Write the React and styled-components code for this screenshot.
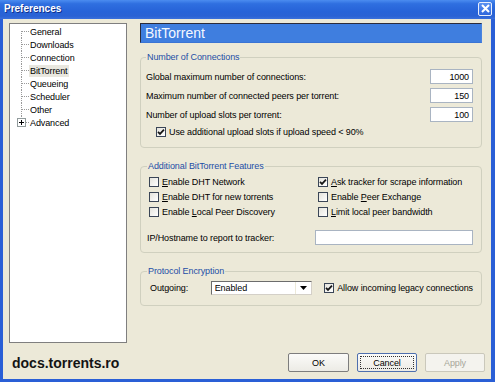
import React from "react";
import styled, { createGlobalStyle, css } from "styled-components";

const GlobalStyle = createGlobalStyle`
  *,
  *::before,
  *::after {
    box-sizing: border-box;
  }
  html,
  body {
    margin: 0;
    padding: 0;
    background: #ece9d8;
  }
  body {
    font-family: "Liberation Sans", Arial, sans-serif;
    font-size: 9px;
    letter-spacing: -0.1px;
    color: #000;
  }
`;

const treeItems = [
  "General",
  "Downloads",
  "Connection",
  "BitTorrent",
  "Queueing",
  "Scheduler",
  "Other",
  "Advanced"
];

function CheckMark() {
  return (
    <svg width="8" height="8" viewBox="0 0 8 8">
      <polyline
        points="1,3.8 3,5.9 7,1.6"
        fill="none"
        stroke="#151515"
        strokeWidth="1.7"
      />
    </svg>
  );
}

function Check({ checked, children }) {
  return (
    <CheckRow>
      <Box>{checked && <CheckMark />}</Box>
      <span>{children}</span>
    </CheckRow>
  );
}

function App() {
  return (
    <Window>
      <GlobalStyle />
      <TitleBar>
        <Title>Preferences</Title>
        <CloseButton>
          <svg width="9" height="9" viewBox="0 0 9 9">
            <path d="M1 1 L8 8 M8 1 L1 8" stroke="#fff" strokeWidth="2" />
          </svg>
        </CloseButton>
      </TitleBar>
      <Frame>
        <Body>
          <Main>
            <Tree>
              {treeItems.map((item, i) => (
                <TreeItem key={item}>
                  <Gutter $first={i === 0} $last={i === treeItems.length - 1}>
                    {item === "Advanced" && (
                      <Expander>
                        <svg width="9" height="9" viewBox="0 0 9 9">
                          <rect x="0.5" y="0.5" width="8" height="8" fill="#fff" stroke="#919b9c" />
                          <path d="M2 4.5 H7 M4.5 2 V7" stroke="#000" />
                        </svg>
                      </Expander>
                    )}
                  </Gutter>
                  <TreeLabel $selected={item === "BitTorrent"}>{item}</TreeLabel>
                </TreeItem>
              ))}
            </Tree>
            <Panel>
              <Header>BitTorrent</Header>
              <Group $top={8} $pad="6px 8px 8px 5px">
                <Legend>Number of Connections</Legend>
                <Rows>
                  <Row>
                    <span>Global maximum number of connections:</span>
                    <NumberBox>1000</NumberBox>
                  </Row>
                  <Row>
                    <span>Maximum number of connected peers per torrent:</span>
                    <NumberBox>150</NumberBox>
                  </Row>
                  <Row>
                    <span>Number of upload slots per torrent:</span>
                    <NumberBox>100</NumberBox>
                  </Row>
                  <Indented>
                    <Check checked>Use additional upload slots if upload speed &lt; 90%</Check>
                  </Indented>
                </Rows>
              </Group>
              <Group $top={12} $pad="2px 8px 7px 6px">
                <Legend>Additional BitTorrent Features</Legend>
                <Features>
                  <Check>
                    <u>E</u>nable DHT Network
                  </Check>
                  <Check checked>
                    <u>A</u>sk tracker for scrape information
                  </Check>
                  <Check>
                    <u>E</u>nable DHT for new torrents
                  </Check>
                  <Check>
                    Enable <u>P</u>eer Exchange
                  </Check>
                  <Check>
                    Enable <u>L</u>ocal Peer Discovery
                  </Check>
                  <Check>
                    <u>L</u>imit local peer bandwidth
                  </Check>
                </Features>
                <IpRow>
                  <span>IP/Hostname to report to tracker:</span>
                  <TextBox $width={158} />
                </IpRow>
              </Group>
              <Group $top={12} $pad="4px 8px 10px 6px">
                <Legend>Protocol Encryption</Legend>
                <EncRow>
                  <OutLabel>Outgoing:</OutLabel>
                  <Select>
                    <SelectText>Enabled</SelectText>
                    <SelectArrow>
                      <svg width="7" height="4" viewBox="0 0 7 4">
                        <path d="M0 0 H7 L3.5 4 Z" fill="#000" />
                      </svg>
                    </SelectArrow>
                  </Select>
                  <Check checked>Allow incoming legacy connections</Check>
                </EncRow>
              </Group>
            </Panel>
          </Main>
          <Footer>
            <Brand>docs.torrents.ro</Brand>
            <Buttons>
              <Button $width={61}>OK</Button>
              <Button $width={60} $focused>
                <Focus>Cancel</Focus>
              </Button>
              <Button $width={60} $disabled>
                Apply
              </Button>
            </Buttons>
          </Footer>
        </Body>
      </Frame>
    </Window>
  );
}

const Window = styled.div`
  width: 495px;
  height: 382px;
  display: flex;
  flex-direction: column;
  background: #2a5fd6;
  overflow: hidden;
`;
const TitleBar = styled.div`
  height: 19px;
  flex: none;
  display: flex;
  align-items: center;
  justify-content: space-between;
  padding: 0 3px 2px 4px;
  background: linear-gradient(
    #4b8cf0 0%,
    #2f6fe0 20%,
    #2763d8 60%,
    #2a62d4 85%,
    #3a70dc 100%
  );
`;
const Title = styled.span`
  color: #fff;
  font-family: "Liberation Sans", Arial, sans-serif;
  font-weight: bold;
  font-size: 10px;
  letter-spacing: 0;
  text-shadow: 1px 1px 0 #0f2f8a;
`;
const CloseButton = styled.div`
  width: 14px;
  height: 14px;
  display: flex;
  align-items: center;
  justify-content: center;
  background: linear-gradient(#5a92f2, #2f67dc);
  border: 1px solid #e8eefc;
  border-radius: 2px;
`;
const Frame = styled.div`
  flex: 1;
  display: flex;
  min-width: 0;
  padding: 0 4px 3px 3px;
`;
const Body = styled.div`
  flex: 1;
  min-width: 0;
  display: flex;
  flex-direction: column;
  padding: 4px 6px 7px 6px;
  background: #ece9d8;
`;
const Main = styled.div`
  display: flex;
  height: 320px;
  margin-right: 3px;
`;
const Tree = styled.div`
  width: 118px;
  flex: none;
  padding-top: 1px;
  background: #fff;
  border: 1px solid #7f7f7f;
`;
const TreeItem = styled.div`
  height: 13px;
  display: flex;
  align-items: center;
`;
const Gutter = styled.div`
  position: relative;
  width: 19px;
  height: 13px;
  flex: none;
  &::before {
    content: "";
    position: absolute;
    left: 11px;
    top: ${p => (p.$first ? "6px" : "0")};
    bottom: ${p => (p.$last ? "6px" : "0")};
    border-left: 1px dotted #9a9a9a;
  }
  &::after {
    content: "";
    position: absolute;
    left: 12px;
    top: 6px;
    width: 7px;
    border-top: 1px dotted #9a9a9a;
  }
`;
const Expander = styled.div`
  position: absolute;
  left: 7px;
  top: 2px;
  z-index: 1;
  line-height: 0;
`;
const TreeLabel = styled.span`
  padding: 0 1px;
  line-height: 12px;
  white-space: nowrap;
  ${p =>
    p.$selected &&
    css`
      background: #e9e7df;
    `}
`;
const Panel = styled.div`
  flex: 1;
  min-width: 0;
  margin-left: 13px;
  display: flex;
  flex-direction: column;
`;
const Header = styled.div`
  height: 20px;
  display: flex;
  align-items: center;
  padding-left: 4px;
  font-size: 14px;
  letter-spacing: 0;
  color: #f4f8ff;
  background: #3f7edf;
  border: 1px solid;
  border-color: #2b2b3a #4a84e0 #3a74d4 #2b2b3a;
`;
const Group = styled.fieldset`
  margin: ${p => p.$top}px 0 0;
  padding: ${p => p.$pad};
  min-width: 0;
  border: 1px solid #d0d0bf;
  border-radius: 4px;
`;
const Legend = styled.legend`
  padding: 0 1px;
  line-height: 12px;
  color: #1d4ea6;
`;
const Rows = styled.div`
  display: flex;
  flex-direction: column;
  gap: 4px;
`;
const Row = styled.div`
  height: 15px;
  display: flex;
  align-items: center;
  justify-content: space-between;
`;
const NumberBox = styled.div`
  width: 43px;
  height: 15px;
  padding-right: 3px;
  display: flex;
  align-items: center;
  justify-content: flex-end;
  background: #fff;
  border: 1px solid #a9b4c2;
`;
const TextBox = styled.div`
  width: ${p => p.$width}px;
  height: 15px;
  background: #fff;
  border: 1px solid #a9b4c2;
`;
const Indented = styled.div`
  margin-top: -2px;
  padding-left: 10px;
`;
const CheckRow = styled.div`
  height: 15px;
  display: flex;
  align-items: center;
  gap: 3px;
  white-space: nowrap;
  u {
    text-decoration: underline;
    text-underline-offset: 1px;
  }
`;
const Box = styled.span`
  width: 10px;
  height: 10px;
  flex: none;
  display: flex;
  align-items: center;
  justify-content: center;
  background: linear-gradient(135deg, #e4e3dc, #fff);
  border: 1px solid #3a4556;
`;
const Features = styled.div`
  display: grid;
  grid-template-columns: 169px 1fr;
  margin-left: 2px;
`;
const IpRow = styled.div`
  margin-top: 11px;
  height: 15px;
  display: flex;
  align-items: center;
  justify-content: space-between;
`;
const EncRow = styled.div`
  height: 14px;
  display: flex;
  align-items: center;
  padding-left: 3px;
`;
const OutLabel = styled.span`
  width: 61px;
`;
const Select = styled.div`
  width: 102px;
  height: 14px;
  margin-right: 12px;
  display: flex;
  align-items: center;
  background: #fff;
  border: 1px solid;
  border-color: #6c6c6c #d4d0c8 #d4d0c8 #6c6c6c;
`;
const SelectText = styled.span`
  flex: 1;
  padding-left: 3px;
`;
const SelectArrow = styled.span`
  width: 16px;
  height: 12px;
  display: flex;
  align-items: center;
  justify-content: center;
  border-left: 1px solid #ece9d8;
`;
const Footer = styled.div`
  margin-top: 10px;
  height: 19px;
  display: flex;
  align-items: center;
  justify-content: space-between;
`;
const Brand = styled.span`
  margin-left: 3px;
  font-size: 14px;
  font-weight: bold;
  letter-spacing: 0;
  color: #141414;
`;
const Buttons = styled.div`
  display: flex;
  gap: 8px;
`;
const Button = styled.div`
  width: ${p => p.$width}px;
  height: 19px;
  display: flex;
  align-items: center;
  justify-content: center;
  background: linear-gradient(#fbfbf9, #ecebe5);
  border: 1px solid #7d7d7d;
  border-radius: 2px;
  ${p =>
    p.$focused &&
    css`
      border-color: #4e6fae;
      padding: 2px;
    `}
  ${p =>
    p.$disabled &&
    css`
      color: #a7a69a;
      background: #f4f3ee;
      border-color: #cac8bb;
    `}
`;
const Focus = styled.span`
  width: 100%;
  height: 100%;
  display: flex;
  align-items: center;
  justify-content: center;
  border: 1px dotted #333;
`;

export default App;
